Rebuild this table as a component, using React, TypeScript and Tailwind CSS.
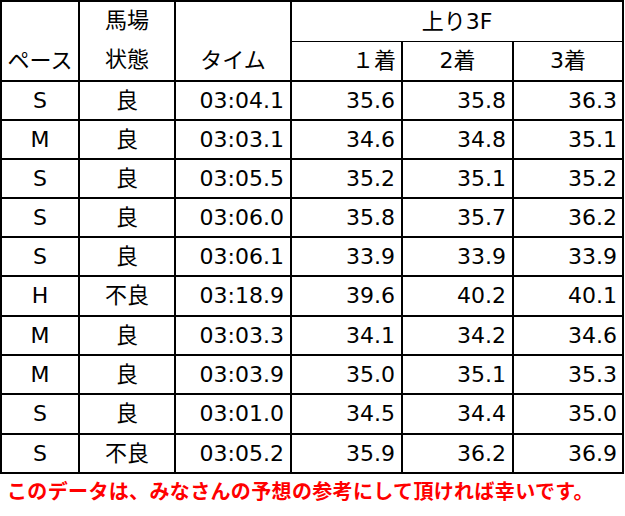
const rows = [
  { pace: "S", baba: "良", time: "03:04.1", f1: "35.6", f2: "35.8", f3: "36.3", h: "h-[39px]" },
  { pace: "M", baba: "良", time: "03:03.1", f1: "34.6", f2: "34.8", f3: "35.1", h: "h-[39px]" },
  { pace: "S", baba: "良", time: "03:05.5", f1: "35.2", f2: "35.1", f3: "35.2", h: "h-[39px]" },
  { pace: "S", baba: "良", time: "03:06.0", f1: "35.8", f2: "35.7", f3: "36.2", h: "h-[39px]" },
  { pace: "S", baba: "良", time: "03:06.1", f1: "33.9", f2: "33.9", f3: "33.9", h: "h-[39px]" },
  { pace: "H", baba: "不良", time: "03:18.9", f1: "39.6", f2: "40.2", f3: "40.1", h: "h-[40px]" },
  { pace: "M", baba: "良", time: "03:03.3", f1: "34.1", f2: "34.2", f3: "34.6", h: "h-[39px]" },
  { pace: "M", baba: "良", time: "03:03.9", f1: "35.0", f2: "35.1", f3: "35.3", h: "h-[39px]" },
  { pace: "S", baba: "良", time: "03:01.0", f1: "34.5", f2: "34.4", f3: "35.0", h: "h-[40px]" },
  { pace: "S", baba: "不良", time: "03:05.2", f1: "35.9", f2: "36.2", f3: "36.9", h: "h-[39px]" },
];

const cell = "flex items-center border-r-2 border-b-2 border-black";

export default function App() {
  return (
    <div className="min-h-screen bg-white text-black font-['DejaVu_Sans','Noto_Sans_CJK_JP',sans-serif] text-[22px] leading-none">
      <div className="grid w-max grid-cols-[78px_96px_116px_111px_111px_110px] border-l-2 border-t-2 border-black">
        {/* header */}
        <div className={`${cell} row-span-2 h-[80px] justify-center pt-[40px]`}>ペース</div>
        <div className="row-span-2 flex h-[80px] flex-col border-r-2 border-b-2 border-black">
          <div className="flex h-[38px] items-center justify-center">馬場</div>
          <div className="flex h-[40px] items-center justify-center">状態</div>
        </div>
        <div className={`${cell} row-span-2 h-[80px] justify-center pt-[40px]`}>タイム</div>
        <div className="col-span-3 flex h-[40px] items-center justify-center border-r-2 border-b border-black">
          上り3F
        </div>
        <div className={`${cell} h-[40px] justify-end pr-[5px]`}>１着</div>
        <div className={`${cell} h-[40px] justify-center`}>2着</div>
        <div className={`${cell} h-[40px] justify-center`}>3着</div>

        {/* body */}
        {rows.map((r, i) => (
          <div key={i} className="contents">
            <div className={`${cell} ${r.h} justify-center`}>{r.pace}</div>
            <div className={`${cell} ${r.h} justify-center`}>{r.baba}</div>
            <div className={`${cell} ${r.h} justify-end pr-[6px]`}>{r.time}</div>
            <div className={`${cell} ${r.h} justify-end pr-[6px]`}>{r.f1}</div>
            <div className={`${cell} ${r.h} justify-end pr-[6px]`}>{r.f2}</div>
            <div className={`${cell} ${r.h} justify-end pr-[5px]`}>{r.f3}</div>
          </div>
        ))}
      </div>

      <p className="mt-[2px] pl-[7px] font-['Noto_Sans_CJK_JP',sans-serif] text-[20px] font-bold leading-[30px] tracking-[0.35px] text-[#ff0000]">
        このデータは、みなさんの予想の参考にして頂ければ幸いです。
      </p>
    </div>
  );
}
